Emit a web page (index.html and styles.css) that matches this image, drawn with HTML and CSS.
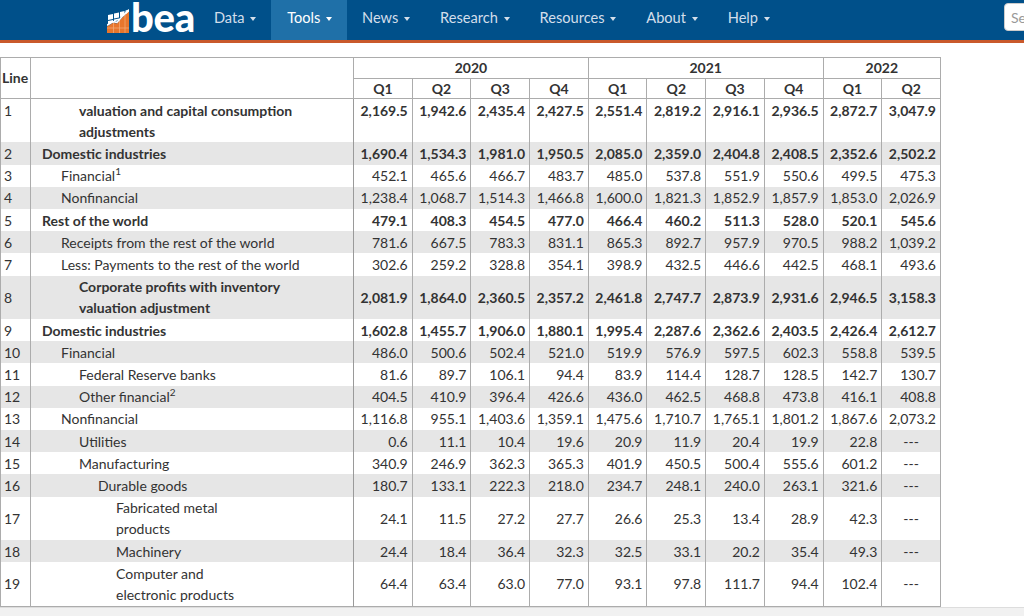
FILE: index.html
```html
<!DOCTYPE html>
<html lang="en">
<head>
<meta charset="utf-8">
<title>BEA Interactive Data</title>
<link rel="stylesheet" href="styles.css">
</head>
<body>
<header class="navbar">
  <div class="navbar-inner">
    <a class="brand" href="#">
      <svg class="brand-icon" width="22" height="28" viewBox="0 0 22 28" aria-hidden="true">
        <g fill="#ffffff">
          <polygon points="1,10 6,9 6,14 1,15"/>
          <polygon points="7,8.5 12,7.5 12,12.5 7,13.5"/>
          <polygon points="13,7 17.5,6 17.5,11 13,12"/>
          <polygon points="18.5,5.5 22,4.5 22,9.5 18.5,10.5"/>
          <polygon points="1,16 6,15 6,17.5 1,19.5"/>
          <polygon points="7,14.5 12,13.5 12,15 7,16.5"/>
          <polygon points="13,13 14,12.8 13,13.8"/>
        </g>
        <polygon fill="#e8762c" points="0,21.5 6,17.8 10,18.6 15,12.8 22,6.5 22,28 0,28"/>
        <g stroke="#f4b07e" stroke-width="0.7">
          <line x1="6.5" y1="17" x2="6.5" y2="28"/>
          <line x1="12.5" y1="14" x2="12.5" y2="28"/>
          <line x1="18" y1="9" x2="18" y2="28"/>
          <line x1="0" y1="23" x2="22" y2="23"/>
        </g>
        <polyline fill="none" stroke="#ffffff" stroke-width="1.6" points="0,20.3 6,16.6 10,17.4 15,11.5 22,4.8"/>
      </svg>
      <span class="brand-text">bea</span>
    </a>
    <ul class="nav">
      <li class="nav-item"><a href="#">Data <span class="caret"></span></a></li>
      <li class="nav-item active"><a href="#">Tools <span class="caret"></span></a></li>
      <li class="nav-item"><a href="#">News <span class="caret"></span></a></li>
      <li class="nav-item"><a href="#">Research <span class="caret"></span></a></li>
      <li class="nav-item"><a href="#">Resources <span class="caret"></span></a></li>
      <li class="nav-item"><a href="#">About <span class="caret"></span></a></li>
      <li class="nav-item"><a href="#">Help <span class="caret"></span></a></li>
    </ul>
    <div class="search">
      <input class="search-input" type="text" placeholder="Search">
    </div>
  </div>
</header>

<main class="content">
  <table class="data">
    <colgroup>
      <col class="c-line">
      <col class="c-label">
      <col class="c-num"><col class="c-num"><col class="c-num"><col class="c-num">
      <col class="c-num"><col class="c-num"><col class="c-num"><col class="c-num">
      <col class="c-num"><col class="c-num">
    </colgroup>
    <thead>
      <tr class="h-years">
        <th class="h-line" rowspan="2">Line</th>
        <th class="h-label" rowspan="2"></th>
        <th colspan="4">2020</th>
        <th colspan="4">2021</th>
        <th colspan="2">2022</th>
      </tr>
      <tr class="h-quarters">
        <th>Q1</th><th>Q2</th><th>Q3</th><th>Q4</th>
        <th>Q1</th><th>Q2</th><th>Q3</th><th>Q4</th>
        <th>Q1</th><th>Q2</th>
      </tr>
    </thead>
    <tbody>
      <tr class="b top">
        <td class="ln">1</td><td class="lbl i2">valuation and capital consumption<br>adjustments</td>
        <td>2,169.5</td><td>1,942.6</td><td>2,435.4</td><td>2,427.5</td><td>2,551.4</td><td>2,819.2</td><td>2,916.1</td><td>2,936.5</td><td>2,872.7</td><td>3,047.9</td>
      </tr>
      <tr class="b">
        <td class="ln">2</td><td class="lbl i0">Domestic industries</td>
        <td>1,690.4</td><td>1,534.3</td><td>1,981.0</td><td>1,950.5</td><td>2,085.0</td><td>2,359.0</td><td>2,404.8</td><td>2,408.5</td><td>2,352.6</td><td>2,502.2</td>
      </tr>
      <tr>
        <td class="ln">3</td><td class="lbl i1">Financial<sup>1</sup></td>
        <td>452.1</td><td>465.6</td><td>466.7</td><td>483.7</td><td>485.0</td><td>537.8</td><td>551.9</td><td>550.6</td><td>499.5</td><td>475.3</td>
      </tr>
      <tr>
        <td class="ln">4</td><td class="lbl i1">Nonfinancial</td>
        <td>1,238.4</td><td>1,068.7</td><td>1,514.3</td><td>1,466.8</td><td>1,600.0</td><td>1,821.3</td><td>1,852.9</td><td>1,857.9</td><td>1,853.0</td><td>2,026.9</td>
      </tr>
      <tr class="b">
        <td class="ln">5</td><td class="lbl i0">Rest of the world</td>
        <td>479.1</td><td>408.3</td><td>454.5</td><td>477.0</td><td>466.4</td><td>460.2</td><td>511.3</td><td>528.0</td><td>520.1</td><td>545.6</td>
      </tr>
      <tr>
        <td class="ln">6</td><td class="lbl i1">Receipts from the rest of the world</td>
        <td>781.6</td><td>667.5</td><td>783.3</td><td>831.1</td><td>865.3</td><td>892.7</td><td>957.9</td><td>970.5</td><td>988.2</td><td>1,039.2</td>
      </tr>
      <tr>
        <td class="ln">7</td><td class="lbl i1">Less: Payments to the rest of the world</td>
        <td>302.6</td><td>259.2</td><td>328.8</td><td>354.1</td><td>398.9</td><td>432.5</td><td>446.6</td><td>442.5</td><td>468.1</td><td>493.6</td>
      </tr>
      <tr class="b">
        <td class="ln">8</td><td class="lbl i2">Corporate profits with inventory<br>valuation adjustment</td>
        <td>2,081.9</td><td>1,864.0</td><td>2,360.5</td><td>2,357.2</td><td>2,461.8</td><td>2,747.7</td><td>2,873.9</td><td>2,931.6</td><td>2,946.5</td><td>3,158.3</td>
      </tr>
      <tr class="b">
        <td class="ln">9</td><td class="lbl i0">Domestic industries</td>
        <td>1,602.8</td><td>1,455.7</td><td>1,906.0</td><td>1,880.1</td><td>1,995.4</td><td>2,287.6</td><td>2,362.6</td><td>2,403.5</td><td>2,426.4</td><td>2,612.7</td>
      </tr>
      <tr>
        <td class="ln">10</td><td class="lbl i1">Financial</td>
        <td>486.0</td><td>500.6</td><td>502.4</td><td>521.0</td><td>519.9</td><td>576.9</td><td>597.5</td><td>602.3</td><td>558.8</td><td>539.5</td>
      </tr>
      <tr>
        <td class="ln">11</td><td class="lbl i2">Federal Reserve banks</td>
        <td>81.6</td><td>89.7</td><td>106.1</td><td>94.4</td><td>83.9</td><td>114.4</td><td>128.7</td><td>128.5</td><td>142.7</td><td>130.7</td>
      </tr>
      <tr>
        <td class="ln">12</td><td class="lbl i2">Other financial<sup>2</sup></td>
        <td>404.5</td><td>410.9</td><td>396.4</td><td>426.6</td><td>436.0</td><td>462.5</td><td>468.8</td><td>473.8</td><td>416.1</td><td>408.8</td>
      </tr>
      <tr>
        <td class="ln">13</td><td class="lbl i1">Nonfinancial</td>
        <td>1,116.8</td><td>955.1</td><td>1,403.6</td><td>1,359.1</td><td>1,475.6</td><td>1,710.7</td><td>1,765.1</td><td>1,801.2</td><td>1,867.6</td><td>2,073.2</td>
      </tr>
      <tr>
        <td class="ln">14</td><td class="lbl i2">Utilities</td>
        <td>0.6</td><td>11.1</td><td>10.4</td><td>19.6</td><td>20.9</td><td>11.9</td><td>20.4</td><td>19.9</td><td>22.8</td><td class="na">---</td>
      </tr>
      <tr>
        <td class="ln">15</td><td class="lbl i2">Manufacturing</td>
        <td>340.9</td><td>246.9</td><td>362.3</td><td>365.3</td><td>401.9</td><td>450.5</td><td>500.4</td><td>555.6</td><td>601.2</td><td class="na">---</td>
      </tr>
      <tr>
        <td class="ln">16</td><td class="lbl i3">Durable goods</td>
        <td>180.7</td><td>133.1</td><td>222.3</td><td>218.0</td><td>234.7</td><td>248.1</td><td>240.0</td><td>263.1</td><td>321.6</td><td class="na">---</td>
      </tr>
      <tr>
        <td class="ln">17</td><td class="lbl i4">Fabricated metal<br>products</td>
        <td>24.1</td><td>11.5</td><td>27.2</td><td>27.7</td><td>26.6</td><td>25.3</td><td>13.4</td><td>28.9</td><td>42.3</td><td class="na">---</td>
      </tr>
      <tr>
        <td class="ln">18</td><td class="lbl i4">Machinery</td>
        <td>24.4</td><td>18.4</td><td>36.4</td><td>32.3</td><td>32.5</td><td>33.1</td><td>20.2</td><td>35.4</td><td>49.3</td><td class="na">---</td>
      </tr>
      <tr>
        <td class="ln">19</td><td class="lbl i4">Computer and<br>electronic products</td>
        <td>64.4</td><td>63.4</td><td>63.0</td><td>77.0</td><td>93.1</td><td>97.8</td><td>111.7</td><td>94.4</td><td>102.4</td><td class="na">---</td>
      </tr>
    </tbody>
  </table>
  <div class="hscroll"></div>
</main>
</body>
</html>
```

FILE: styles.css
```css
html, body {
  margin: 0;
  padding: 0;
  overflow: hidden;
  background: #ffffff;
}

body {
  font-family: Lato, "Liberation Sans", Arial, sans-serif;
  color: #333333;
}

/* ---------- Navbar ---------- */
.navbar {
  height: 40px;
  background: #00508a;
  border-bottom: 3px solid #c9592b;
}

.navbar-inner {
  height: 40px;
  display: flex;
  align-items: flex-start;
}

.brand {
  display: flex;
  align-items: flex-start;
  height: 40px;
  margin-left: 107px;
  text-decoration: none;
}

.brand-icon {
  display: block;
  flex-shrink: 0;
  margin-top: 5px;
}

.brand-text {
  display: block;
  font-family: Lato, "Liberation Sans", sans-serif;
  font-weight: 900;
  font-size: 40px;
  line-height: 40px;
  height: 40px;
  color: #ffffff;
  margin-left: 2px;
  margin-top: -3px;
  letter-spacing: -0.3px;
}

.nav {
  list-style: none;
  margin: 0 0 0 4px;
  padding: 0;
  display: flex;
}

.nav-item a {
  display: block;
  height: 40px;
  box-sizing: border-box;
  padding: 8px 15px 0 15px;
  font-size: 14.6px;
  line-height: 20px;
  color: #d3deea;
  text-decoration: none;
  white-space: nowrap;
}

.nav-item.active a {
  background: #1f70a8;
  color: #ffffff;
  padding-left: 16px;
  padding-right: 15px;
}

.caret {
  display: inline-block;
  width: 0;
  height: 0;
  margin-left: 2px;
  vertical-align: middle;
  border-top: 4px solid currentColor;
  border-left: 3.5px solid transparent;
  border-right: 3.5px solid transparent;
}

.search {
  margin-left: auto;
  width: 20px;
  padding-top: 3px;
  overflow: hidden;
}

.search-input {
  display: block;
  width: 200px;
  height: 28px;
  box-sizing: border-box;
  border: 1px solid #cccccc;
  border-radius: 4px;
  padding: 0 6px;
  font-family: Lato, "Liberation Sans", sans-serif;
  font-size: 14px;
  color: #555555;
  background: #ffffff;
}

.search-input::placeholder {
  color: #999999;
}

/* ---------- Table ---------- */
.content {
  padding-top: 14px;
}

.data {
  border-collapse: collapse;
  table-layout: fixed;
  width: 940px;
  font-family: Lato, "Liberation Sans", sans-serif;
  font-size: 14px;
  color: #333333;
  border: 1px solid #acacac;
}

.c-line { width: 30px; }
.c-label { width: 323px; }
.c-num { width: 58.7px; }

.data th {
  border: 1px solid #acacac;
  font-weight: 700;
  text-align: center;
  line-height: 20px;
  padding: 0;
  background: #ffffff;
}

.data .h-quarters th {
  line-height: 19px;
}

.data th.h-line {
  text-align: left;
  padding-left: 1px;
  vertical-align: middle;
}

.data td {
  border-left: 1px solid #acacac;
  border-right: 1px solid #acacac;
  padding: 0.5px 4px 0.5px 4px;
  line-height: 21.2px;
  text-align: right;
  vertical-align: middle;
  white-space: nowrap;
}

.data td.ln {
  text-align: left;
  padding-left: 3px;
}

.data td.lbl {
  text-align: left;
  border-right: 1px solid #9a9a9a;
}

.data td.na {
  text-align: center;
}

.i0 { padding-left: 11px !important; }
.i1 { padding-left: 30px !important; }
.i2 { padding-left: 48px !important; }
.i3 { padding-left: 67px !important; }
.i4 { padding-left: 85px !important; }

.data tbody tr:nth-child(even) {
  background: #e6e6e6;
}

.data tr.b td {
  font-weight: 700;
}

.data tr.b td.ln {
  font-weight: 400;
}

.data tr.top td {
  vertical-align: top;
}

.data sup {
  font-size: 10px;
  line-height: 0;
  vertical-align: 6px;
}

.hscroll {
  height: 20px;
  background: #f1f1f1;
  border-top: 1px solid #dddddd;
}
```
